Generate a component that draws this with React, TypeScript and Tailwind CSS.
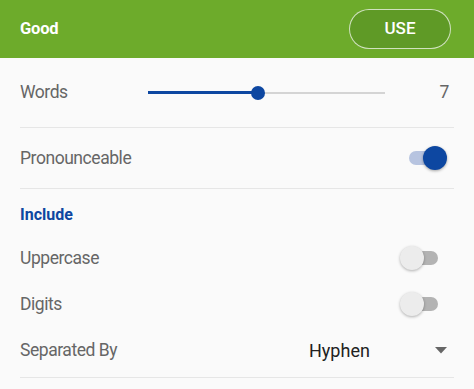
import React from 'react';

// Small switch in the Material style used by the settings rows
function Switch({ on }: { on: boolean }) {
    return (
        <div className="relative h-[24px] w-[46px]">
            <div
                className={`absolute top-[5px] h-[14px] w-[36px] rounded-full ${on ? 'left-[8px] bg-[#b7c4e0]' : 'left-[2px] bg-[#b3b3b3]'}`}
            />
            <div
                className={`absolute top-0 h-[24px] w-[24px] rounded-full ${on ? 'left-[22px] bg-[#0d47a1] shadow-[0_1px_3px_rgba(0,0,0,0.35)]' : 'left-0 bg-[#ececec] shadow-[0_1px_3px_rgba(0,0,0,0.3)]'}`}
            />
        </div>
    );
}

export default function App() {
    const words = 7;
    const label = 'text-[17.5px] tracking-[-0.45px] text-[#666]';

    return (
        <div className="w-[474px] h-[389px] bg-[#fafafa] overflow-hidden" style={{ fontFamily: 'Roboto, "Noto Sans", sans-serif' }}>
            {/* Header */}
            <div className="h-[58px] bg-[#6dab2b] flex items-center justify-between pl-5 pr-[23px]">
                <span className="text-white font-bold text-[16.5px] tracking-[-0.2px]">Good</span>
                <button className="h-[40px] w-[102px] rounded-full border-[1.5px] border-white/70 bg-[#5f9a26] text-white text-[17px] font-medium">
                    USE
                </button>
            </div>

            <div className="px-5">
                {/* Words */}
                <div className="h-[69px] flex items-center">
                    <span className={`w-[128px] ${label}`}>Words</span>
                    <div className="relative w-[237px] h-[14px] flex items-center">
                        <div className="h-[3px] w-[110px] bg-[#0d47a1]" />
                        <div className="h-[2px] flex-1 bg-[#d4d4d4]" />
                        <div className="absolute left-[103px] top-0 h-[14px] w-[14px] rounded-full bg-[#0d47a1]" />
                    </div>
                    <span className={`flex-1 text-right pr-[5px] ${label}`}>{words}</span>
                </div>
                <div className="h-px bg-[#e6e6e6]" />

                {/* Pronounceable */}
                <div className="h-[60px] flex items-center justify-between">
                    <span className={label}>Pronounceable</span>
                    <div className="mr-[7px]">
                        <Switch on />
                    </div>
                </div>
                <div className="h-px bg-[#e6e6e6]" />

                {/* Include */}
                <div className="h-[46px] pt-[6px] flex items-center">
                    <span className="text-[16px] font-bold text-[#0d47a1]">Include</span>
                </div>
                <div className="h-[46px] flex items-center justify-between">
                    <span className={label}>Uppercase</span>
                    <div className="mr-[8px]">
                        <Switch on={false} />
                    </div>
                </div>
                <div className="h-[46px] flex items-center justify-between">
                    <span className={label}>Digits</span>
                    <div className="mr-[8px]">
                        <Switch on={false} />
                    </div>
                </div>
                <div className="h-[46px] flex items-center">
                    <span className={`w-[289px] ${label}`}>Separated By</span>
                    <span className="flex-1 text-[18px] text-[#212121]">Hyphen</span>
                    <svg width="12" height="7" viewBox="0 0 12 7" className="mr-[7px]">
                        <path d="M0 0 L12 0 L6 6.5 Z" fill="#666" />
                    </svg>
                </div>
                <div className="mt-[4px] h-px bg-[#e6e6e6]" />
            </div>
        </div>
    );
}
